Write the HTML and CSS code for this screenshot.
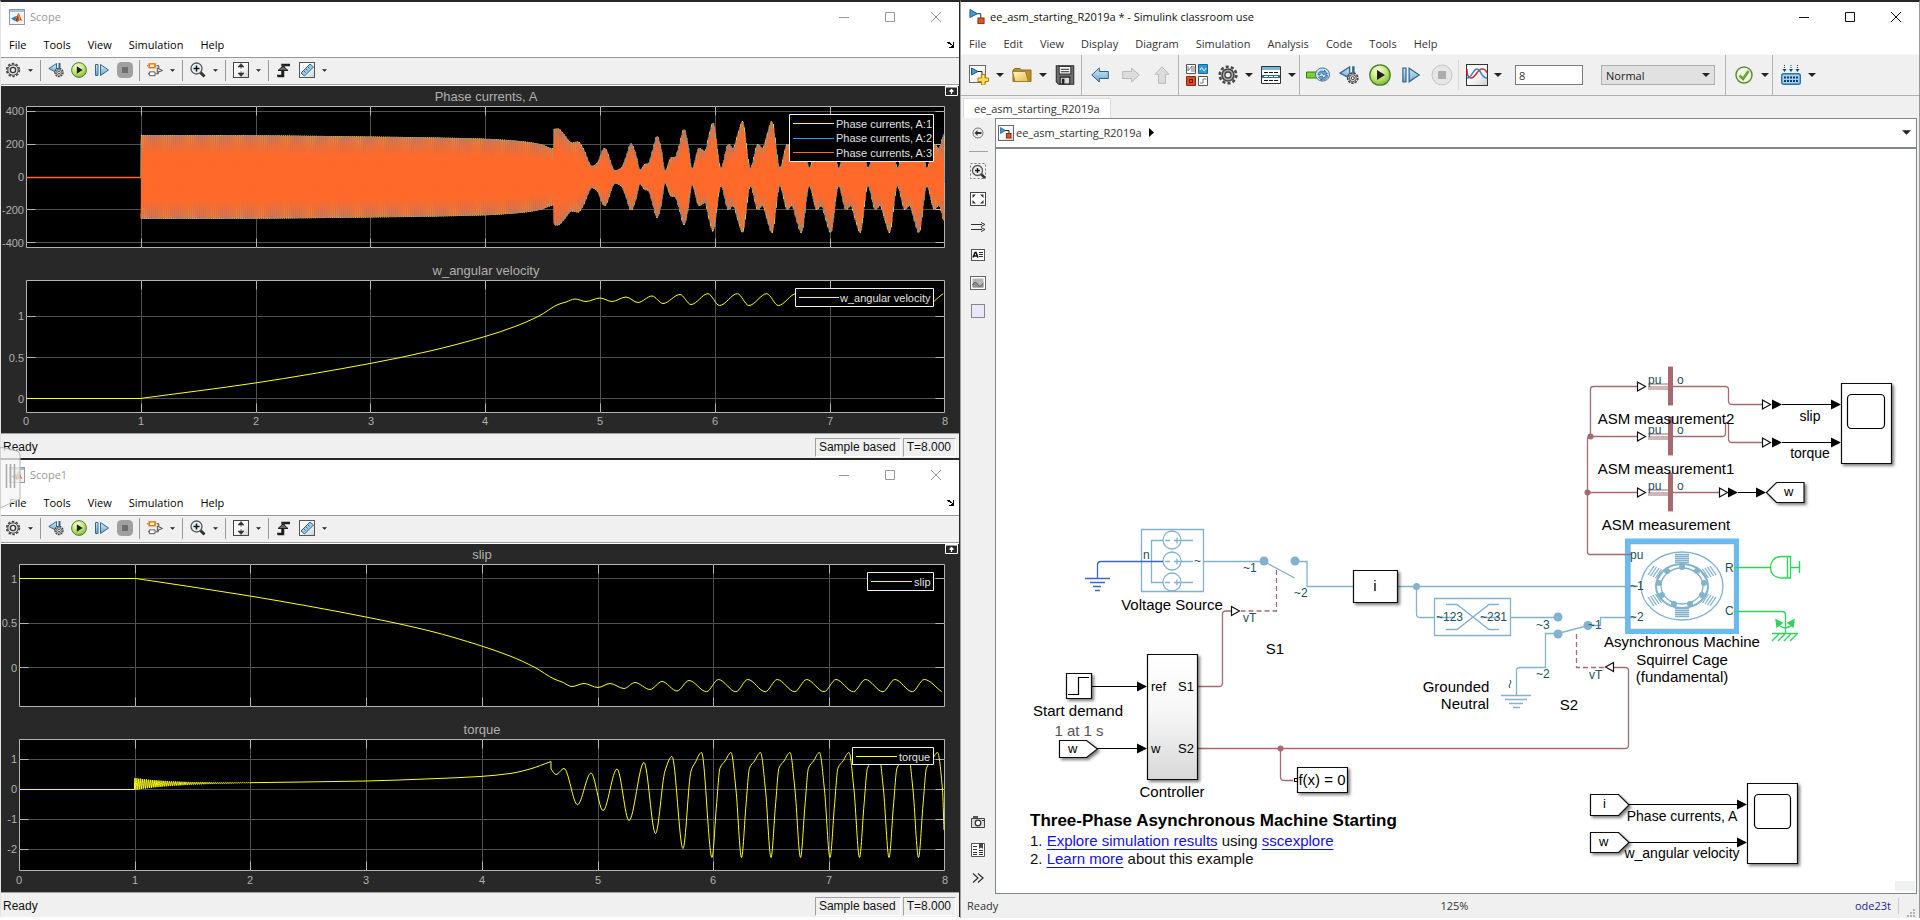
FILE: index.html
```html
<!DOCTYPE html>
<html lang="en">
<head>
<meta charset="utf-8">
<title>Simulink workspace</title>
<link rel="stylesheet" href="styles.css">
</head>
<body>
<svg class="defs" aria-hidden="true">
  <defs>
    <linearGradient id="gBlue" x1="0" y1="0" x2="0" y2="1"><stop offset="0" stop-color="#d3ebf8"/><stop offset="1" stop-color="#69a9d3"/></linearGradient>
    <linearGradient id="gPage" x1="0" y1="0" x2="1" y2="1"><stop offset="0" stop-color="#fff"/><stop offset=".5" stop-color="#fafafa"/><stop offset="1" stop-color="#cfcfcf"/></linearGradient>
    <radialGradient id="gGreen" cx=".4" cy=".3" r=".8"><stop offset="0" stop-color="#fbffe8"/><stop offset=".5" stop-color="#c3e673"/><stop offset="1" stop-color="#69ad2c"/></radialGradient>
    <linearGradient id="gFolder" x1="0" y1="0" x2="1" y2="1"><stop offset="0" stop-color="#fff8cf"/><stop offset="1" stop-color="#e3b94c"/></linearGradient>
    <linearGradient id="gCtl" x1="0" y1="0" x2="0" y2="1"><stop offset="0" stop-color="#fff"/><stop offset=".45" stop-color="#f7f7f7"/><stop offset="1" stop-color="#d8d8d8"/></linearGradient>
    <filter id="shadow" x="-20%" y="-20%" width="150%" height="150%"><feDropShadow dx="2" dy="2" stdDeviation="1.5" flood-color="#000" flood-opacity=".5"/></filter>
  </defs>
  <symbol id="matlab" viewBox="0 0 16 16"><rect x=".5" y=".5" width="15" height="15" fill="#f3f5f7" stroke="#8e9aa5"/><path d="M1 2h14" stroke="#9fc3de" stroke-width="2"/><path d="M2 9.500l4-2 2-.500-2 5z" fill="#2f7fb5"/><path d="M6 11.500C8 9 8.500 4 9.500 4s2 5 4 8c-2-1-3-1-5 1z" fill="#d5552a"/><path d="M9 6c-1 3-1.500 4-2.600 5.500l1.600 1z" fill="#7a2c1c"/><path d="M9.700 5c.5 2 1 5 .8 6.500" stroke="#f5a43c" fill="none"/></symbol>
  <symbol id="simulink" viewBox="0 0 17 17"><path d="M8 5h4.500v5" fill="none" stroke="#222"/><path d="M1 .500v8.500l8-4z" fill="#3d9ad3" stroke="#1c5c8b"/><rect x="9.500" y="9.500" width="6.500" height="6" fill="#dd5526" stroke="#8b2a0d"/></symbol>
  <symbol id="simpage" viewBox="0 0 16 16"><rect x=".5" y=".5" width="15" height="15" fill="url(#gPage)" stroke="#666"/><path d="M7 5.500h4V9" fill="none" stroke="#222"/><path d="M2.500 2.500v6l5-3z" fill="#3d9ad3" stroke="#1c5c8b" stroke-width=".7"/><rect x="8.500" y="8.500" width="4.500" height="4.500" fill="#dd5526" stroke="#8b2a0d"/></symbol>
  <symbol id="gear" viewBox="0 0 16 16"><circle cx="8" cy="8" r="6.300" fill="none" stroke="#444" stroke-width="1.700" stroke-dasharray="2.400 1.560"/><circle cx="8" cy="8" r="5.200" fill="#e3e3e3" stroke="#4a4a4a"/><circle cx="8" cy="8" r="2.600" fill="#f4f4f4" stroke="#3a3a3a" stroke-width="1.400"/></symbol>
  <symbol id="biggear" viewBox="0 0 20 20"><circle cx="10" cy="10" r="8.300" fill="none" stroke="#4a4a4a" stroke-width="2.600" stroke-dasharray="3.100 2.110"/><circle cx="10" cy="10" r="6" fill="#aaa" stroke="#444" stroke-width="1.600"/><circle cx="10" cy="10" r="3" fill="#f1f1f1" stroke="#444" stroke-width="1.300"/></symbol>
  <symbol id="caret" viewBox="0 0 8 4"><path d="M0 0h8L4 4z" fill="#222"/></symbol>
  <symbol id="back" viewBox="0 0 16 16"><path d="M8.500 1.500v9L.800 6.500z" fill="url(#gBlue)" stroke="#35688f"/><path d="M11.500 1v6" stroke="#35688f" stroke-width="2"/><circle cx="11" cy="10.500" r="4" fill="#ececec" stroke="#444" stroke-width="1.400" stroke-dasharray="1.900 .8"/><circle cx="11" cy="10.500" r="2.800" fill="#ddd" stroke="#555" stroke-width=".8"/><circle cx="11" cy="10.500" r="1.200" fill="#fff" stroke="#333" stroke-width=".8"/></symbol>
  <symbol id="play" viewBox="0 0 22 22"><circle cx="11" cy="11" r="10.200" fill="url(#gGreen)" stroke="#47802c" stroke-width="1.300"/><path d="M8 6v10l8-5z" fill="#1f1f1f"/></symbol>
  <symbol id="step" viewBox="0 0 16 16"><path d="M1.500 2.500h2.500v11H1.500z" fill="url(#gBlue)" stroke="#35688f"/><path d="M6.500 2.500v11L14.500 8z" fill="url(#gBlue)" stroke="#35688f"/></symbol>
  <symbol id="stop" viewBox="0 0 16 16"><rect width="16" height="16" rx="4.500" fill="#a0a0a0"/><rect x="5" y="5" width="6" height="6" fill="#6e6e6e"/></symbol>
  <symbol id="blocks" viewBox="0 0 17 16"><path d="M0 3.500h2M9 3.500h3.500v4M1 12h2m6 0h3v-3" fill="none" stroke="#444"/><path d="M1 .500h9v6H1z" fill="#fbcf8c"/><path d="M2.500 1.500h6v4h-6z" fill="#fff1d8" stroke="#d8761c" stroke-width="1.500"/><path d="M2.500 10h6v4h-6z" fill="#fff" stroke="#555"/><path d="M11 6l5.500 2.500L11 10.500z" fill="#eee" stroke="#444"/></symbol>
  <symbol id="zoom" viewBox="0 0 16 16"><path d="M10 10l4.500 4.500" stroke="#333" stroke-width="3"/><circle cx="6.500" cy="6.500" r="5.500" fill="#e5f1f8" stroke="#555" stroke-width="1.300"/><path d="M3.500 6.500h6M6.500 3.500v6" stroke="#111" stroke-width="1.500"/></symbol>
  <symbol id="scale" viewBox="0 0 16 16"><rect x=".5" y=".5" width="15" height="15" fill="url(#gPage)" stroke="#444"/><path d="M8 1.500l3 3.500H5zM8 14.500l3-3.500H5zM8 4v3m0 2v3" fill="#333" stroke="#333" stroke-width=".6"/></symbol>
  <symbol id="trigger" viewBox="0 0 16 16"><path d="M1 13.500h5v-6M1.500 14.500h6v-7M6 4.500V2.500h8M8 5V3.500h6" fill="none" stroke="#1e1e1e" stroke-width="1.500"/><path d="M2 8.500L7 4l5 4.500z" fill="#666" stroke="#1e1e1e"/></symbol>
  <symbol id="ruler" viewBox="0 0 16 16"><rect x=".5" y=".5" width="15" height="15" fill="url(#gPage)" stroke="#555"/><path d="M2 11L11 2l3.500 3L5.500 14z" fill="#9dcbe6" stroke="#31658b"/><path d="M5 9l1.500 1.500M7 7l1.500 1.500M9 5l1.500 1.500" stroke="#31658b"/></symbol>
  <symbol id="dock" viewBox="0 0 8 6"><path d="M0 0h3v1H0zM1 1h3v1H1zM3 2h2v1H3zM6 0h1v6H2V5h2V4h1V3h1z" fill="#000"/></symbol>
  <symbol id="min" viewBox="0 0 10 10"><path d="M0 5.500h10" stroke="currentColor"/></symbol>
  <symbol id="max" viewBox="0 0 10 10"><path d="M.500.500h9v9h-9z" fill="none" stroke="currentColor"/></symbol>
  <symbol id="close" viewBox="0 0 10 10"><path d="M0 0l10 10M10 0L0 10" stroke="currentColor"/></symbol>
  <symbol id="newmodel" viewBox="0 0 20 20"><rect x=".5" y=".5" width="16" height="17" fill="url(#gPage)" stroke="#666"/><path d="M8 6.500h5v6" fill="none" stroke="#222"/><path d="M2.500 3v7l6.500-3.500z" fill="#3d9ad3" stroke="#1c5c8b"/><path d="M12.500 9.500h3.500v3.500h3.500v3.500H16V20h-3.500v-3.500H9V13h3.500z" fill="#ffe05a" stroke="#bb7d12"/></symbol>
  <symbol id="folder" viewBox="0 0 20 16"><path d="M1 14.500V3l2-1.500h5L9.500 3H19v11.500z" fill="#b98f2d" stroke="#8f6d1f"/><path d="M.500 4.500h13l3 10H3z" fill="url(#gFolder)" stroke="#a67c22"/></symbol>
  <symbol id="save" viewBox="0 0 18 19"><path d="M.700.700h16.600v17.600H3L.700 16z" fill="#6d6d6d" stroke="#2c2c2c"/><path d="M3.500 1.500h11v7h-11z" fill="#fff" stroke="#333"/><path d="M5 4h8M5 6.500h8" stroke="#222"/><path d="M4.500 11.500h9v6.500h-9z" fill="#ddd" stroke="#222"/><path d="M6 13h2.500v5H6z" fill="#222"/></symbol>
  <symbol id="left" viewBox="0 0 18 16"><path d="M.800 8l7.500-7v3.500h9v7h-9V15z" fill="url(#gBlue)" stroke="#2f5f86"/></symbol>
  <symbol id="right" viewBox="0 0 18 16"><path d="M17.200 8L9.700 1v3.500h-9v7h9V15z" fill="#ddd" stroke="#b9b9b9"/></symbol>
  <symbol id="up" viewBox="0 0 16 18"><path d="M8 .800l7 7.500h-3.500v9h-7v-9H1z" fill="#ddd" stroke="#b9b9b9"/></symbol>
  <symbol id="library" viewBox="0 0 22 22"><path d="M.500.500h9v9h-9z" fill="#fff" stroke="#555"/><path d="M2 2v5l4-5v6M8 2v6" fill="none" stroke="#777"/><path d="M12.500.500h9v9h-9z" fill="#2d9ad6" stroke="#1c6695"/><path d="M14 6c1.500-4 2.500-2 3-.500s1.500 2.500 3-1.500" fill="none" stroke="#fff"/><path d="M.500 12.500h9v9h-9z" fill="#dd4d1c" stroke="#8e2a08"/><path d="M3.500 15.500h3v3h-3z" fill="none" stroke="#5f1b04"/><path d="M12.500 12.500h9v9h-9z" fill="#fff" stroke="#555"/><path d="M14 19h3v-4h3.500" fill="none" stroke="#777"/></symbol>
  <symbol id="explorer" viewBox="0 0 20 18"><path d="M.500.500h19v17H.500z" fill="#fff" stroke="#333"/><path d="M1 1h18v3H1z" fill="#7db4da"/><path d="M3 6.500h14M3 14.500h14" stroke="#111" stroke-dasharray="4 1"/><path d="M1 9h18v3H1z" fill="#356d9d"/><path d="M3 10.500h14" stroke="#fff" stroke-dasharray="4 1"/></symbol>
  <symbol id="update" viewBox="0 0 24 18"><path d="M.500 6h10v6h-10z" fill="#7ed030" stroke="#397d12"/><rect x="9.500" y="2" width="14" height="13" rx="6.500" fill="#cde5f5" stroke="#3c719e"/><path d="M12 9c0-3.500 3.500-5 6.500-3V4l3 4-4.500.5V7c-2-.500-3 .5-3 2zM21.500 9.500c0 3-3 5-6 3.500v1.500L12.500 11l4-1v1.500c2 .500 3 0 3-2z" fill="#6ea9d4" stroke="#2b5f8b" stroke-width=".7"/></symbol>
  <symbol id="stopoff" viewBox="0 0 22 22"><circle cx="11" cy="11" r="10" fill="#e6e6e6" stroke="#c4c4c4"/><path d="M7 7h8v8H7z" fill="#adadad"/></symbol>
  <symbol id="wave" viewBox="0 0 22 22"><rect x=".5" y=".5" width="21" height="21" fill="url(#gPage)" stroke="#333"/><path d="M1 5c0 6 1 9 4 9 5 0 6-9 11-9 3 0 4 1 5 4" fill="none" stroke="#c8312f" stroke-width="1.500"/><path d="M1 14c5 0 6-9 10-9s4 9 10 9" fill="none" stroke="#3c82c8" stroke-width="1.500"/></symbol>
  <symbol id="check" viewBox="0 0 18 18"><circle cx="9" cy="9" r="8" fill="#f1f6e8" stroke="#5d8a33" stroke-width="1.500"/><path d="M4.500 9.500L8 13l5.500-8" fill="none" stroke="#6aa52a" stroke-width="2.600"/></symbol>
  <symbol id="deploy" viewBox="0 0 20 20"><path d="M3.500 0v5M10 0v5M16.500 0v5" stroke="#16466f" stroke-dasharray="1 1"/><path d="M1.500 4h4l-2 3zM8 4h4l-2 3zM14.500 4h4l-2 3z" fill="#16466f"/><rect x=".7" y="8.700" width="18.600" height="10.600" rx="2" fill="#a5d1f0" stroke="#2573b1" stroke-width="1.400"/><path d="M3 12.500h14M3 16h14" stroke="#123c61" stroke-width="2" stroke-dasharray="2 1"/></symbol>
  <symbol id="hide" viewBox="0 0 16 16"><circle cx="8" cy="8" r="5" fill="#eee" stroke="#777"/><path d="M4.500 8l3-3v2h4v2h-4v2z" fill="#333"/></symbol>
  <symbol id="zoomarea" viewBox="0 0 16 16"><path d="M.500.500h15v15H.500z" fill="none" stroke="#777" stroke-dasharray="2 2"/><path d="M10 10l5 5" stroke="#333" stroke-width="2.500"/><circle cx="7.500" cy="7.500" r="5" fill="#f1f1f1" stroke="#555" stroke-width="1.300"/><path d="M5 7.500h5M7.500 5v5" stroke="#111" stroke-width="1.400"/></symbol>
  <symbol id="fit" viewBox="0 0 16 16"><rect x=".5" y="1.500" width="15" height="13" fill="#fff" stroke="#444"/><path d="M2.500 3.500h3.500L2.500 7zM13.500 3.500H10L13.500 7zM2.500 12.500h3.500L2.500 9zM13.500 12.500H10L13.500 9z" fill="#333"/></symbol>
  <symbol id="arrows" viewBox="0 0 16 16"><path d="M1 5.500h11M1 10.500h11M11 3.500l4 2-4 2M11 8.500l4 2-4 2" fill="none" stroke="#333"/></symbol>
  <symbol id="note" viewBox="0 0 16 16"><rect x="1.500" y="2.500" width="13" height="11" fill="#fff" stroke="#555"/><path d="M3 10.500l2-5h1l2 5M4 9h3" fill="none" stroke="#111" stroke-width="1.500"/><path d="M9 5.500h4M9 7.500h4M9 9.500h4" stroke="#333"/></symbol>
  <symbol id="picture" viewBox="0 0 16 16"><rect x=".5" y="1.500" width="15" height="13" fill="#fff" stroke="#666"/><path d="M2.500 3.500h11v9h-11z" fill="#b5b5b5"/><path d="M2.500 11V9c3-4 5 0 6 1.500s2 1 5-2v4h-11z" fill="#8f8f8f"/><path d="M2.500 10c3-5 4-2 6 .500 1 1.500 2 .500 5-2.500" fill="none" stroke="#555"/></symbol>
  <symbol id="square" viewBox="0 0 16 16"><rect x="1.500" y="1.500" width="13" height="13" fill="#e8e8f8" stroke="#888"/></symbol>
  <symbol id="camera" viewBox="0 0 16 16"><path d="M1.500 4.500h13v9h-13z" fill="#ddd" stroke="#444"/><path d="M3 2h5v2H3z" fill="#555"/><circle cx="8" cy="9" r="2.800" fill="#fff" stroke="#333" stroke-width="1.300"/><path d="M12 6h2v1h-2z" fill="#333"/></symbol>
  <symbol id="books" viewBox="0 0 16 16"><path d="M1.500 1.500h13v13h-13z" fill="#fff" stroke="#555"/><path d="M3 4.500h4M3 7.500h4M3 10.500h4M3 12.500h4M9 8.500h4M9 10.500h4M9 12.500h4" stroke="#333"/><path d="M9 1h4v6l-2-1.500L9 7z" fill="#444"/></symbol>
  <symbol id="more" viewBox="0 0 16 16"><path d="M3 3.500l5 4.500-5 4.500M8 3.500l5 4.500-5 4.500" fill="none" stroke="#333" stroke-width="1.300"/></symbol>
  <symbol id="bar" viewBox="0 0 40 40"><path d="M2 18h20M2 21h20M2 23h20" stroke="#a46a70" stroke-width="1.200"/><path d="M22 1h5v38h-5z" fill="#a46a70"/><path d="M22 0h5v1h-5zM22 39h5v1h-5z" fill="#dcc4c6"/></symbol>
  <symbol id="undock" viewBox="0 0 13 10"><path d="M.500.500h12v9H.500zM0 1h13" fill="#282828" stroke="#fff"/><path d="M6.500 8V4M4.500 5.500l2-2 2 2" fill="none" stroke="#fff" stroke-width="1.200"/></symbol>
</svg>

<main class="desk">
  <div class="scopes">
    <section class="window idle">
      <header class="titlebar"><svg class="i16"><use href="#matlab"/></svg><h1>Scope</h1>
        <button class="wbtn" aria-label="Minimize"><svg><use href="#min"/></svg></button><button class="wbtn" aria-label="Maximize"><svg><use href="#max"/></svg></button><button class="wbtn" aria-label="Close"><svg><use href="#close"/></svg></button></header>
      <nav class="menu"><button>File</button><button>Tools</button><button>View</button><button>Simulation</button><button>Help</button><button class="dock" aria-label="Dock"><svg><use href="#dock"/></svg></button></nav>
      <div class="tools">
        <button aria-label="Settings"><svg class="i16"><use href="#gear"/></svg></button><button class="drop" aria-label="More settings"><svg><use href="#caret"/></svg></button><i></i>
        <button aria-label="Step back"><svg class="i16"><use href="#back"/></svg></button><button aria-label="Run"><svg class="i16"><use href="#play"/></svg></button><button aria-label="Step forward"><svg class="i16"><use href="#step"/></svg></button><button aria-label="Stop"><svg class="i16"><use href="#stop"/></svg></button><i></i>
        <button aria-label="Highlight block"><svg class="i16"><use href="#blocks"/></svg></button><button class="drop" aria-label="More highlight"><svg><use href="#caret"/></svg></button><i></i>
        <button aria-label="Zoom"><svg class="i16"><use href="#zoom"/></svg></button><button class="drop" aria-label="More zoom"><svg><use href="#caret"/></svg></button><i></i>
        <button aria-label="Scale axes"><svg class="i16"><use href="#scale"/></svg></button><button class="drop" aria-label="More scaling"><svg><use href="#caret"/></svg></button><i></i>
        <button aria-label="Triggers"><svg class="i16"><use href="#trigger"/></svg></button><button aria-label="Measurements"><svg class="i16"><use href="#ruler"/></svg></button><button class="drop" aria-label="More measurements"><svg><use href="#caret"/></svg></button>
      </div>
      <svg class="plot" viewBox="1 86 958 347">
        <g id="phase"></g><g id="omega"></g>
        <g class="ptitle"><text x="486" y="101">Phase currents, A</text><text x="486" y="275">w_angular velocity</text></g>
        <g class="ylab"><text x="24" y="115">400</text><text x="24" y="148">200</text><text x="24" y="181">0</text><text x="24" y="214">-200</text><text x="24" y="247">-400</text><text x="24" y="320">1</text><text x="24" y="362">0.5</text><text x="24" y="403">0</text></g>
        <g class="xlab"><text x="26" y="425">0</text><text x="141" y="425">1</text><text x="256" y="425">2</text><text x="371" y="425">3</text><text x="485" y="425">4</text><text x="600" y="425">5</text><text x="715" y="425">6</text><text x="830" y="425">7</text><text x="945" y="425">8</text></g>
        <g class="legend"><path class="frame" d="M789.500 114.500h144v47h-144z"/><path class="y" d="M793 123.500h41"/><path class="b" d="M793 138.500h41"/><path class="o" d="M793 152.500h41"/><text x="836" y="128">Phase currents, A:1</text><text x="836" y="142">Phase currents, A:2</text><text x="836" y="157">Phase currents, A:3</text>
        <path class="frame" d="M795.500 288.500h138v18h-138z"/><path class="y" d="M799 297.500h40"/><text x="840" y="302">w_angular velocity</text></g>
        <use href="#undock" x="945" y="86" width="13" height="10"/>
      </svg>
      <footer class="status"><span>Ready</span><output>Sample based</output><output>T=8.000</output></footer>
    </section>

    <section class="window idle">
      <header class="titlebar"><svg class="i16"><use href="#matlab"/></svg><h1>Scope1</h1>
        <button class="wbtn" aria-label="Minimize"><svg><use href="#min"/></svg></button><button class="wbtn" aria-label="Maximize"><svg><use href="#max"/></svg></button><button class="wbtn" aria-label="Close"><svg><use href="#close"/></svg></button></header>
      <nav class="menu"><button>File</button><button>Tools</button><button>View</button><button>Simulation</button><button>Help</button><button class="dock" aria-label="Dock"><svg><use href="#dock"/></svg></button></nav>
      <div class="tools">
        <button aria-label="Settings"><svg class="i16"><use href="#gear"/></svg></button><button class="drop" aria-label="More settings"><svg><use href="#caret"/></svg></button><i></i>
        <button aria-label="Step back"><svg class="i16"><use href="#back"/></svg></button><button aria-label="Run"><svg class="i16"><use href="#play"/></svg></button><button aria-label="Step forward"><svg class="i16"><use href="#step"/></svg></button><button aria-label="Stop"><svg class="i16"><use href="#stop"/></svg></button><i></i>
        <button aria-label="Highlight block"><svg class="i16"><use href="#blocks"/></svg></button><button class="drop" aria-label="More highlight"><svg><use href="#caret"/></svg></button><i></i>
        <button aria-label="Zoom"><svg class="i16"><use href="#zoom"/></svg></button><button class="drop" aria-label="More zoom"><svg><use href="#caret"/></svg></button><i></i>
        <button aria-label="Scale axes"><svg class="i16"><use href="#scale"/></svg></button><button class="drop" aria-label="More scaling"><svg><use href="#caret"/></svg></button><i></i>
        <button aria-label="Triggers"><svg class="i16"><use href="#trigger"/></svg></button><button aria-label="Measurements"><svg class="i16"><use href="#ruler"/></svg></button><button class="drop" aria-label="More measurements"><svg><use href="#caret"/></svg></button>
      </div>
      <svg class="plot" viewBox="1 544 958 348">
        <g id="slip"></g><g id="torque"></g>
        <g class="ptitle"><text x="482" y="559">slip</text><text x="482" y="734">torque</text></g>
        <g class="ylab"><text x="17" y="583">1</text><text x="17" y="627">0.5</text><text x="17" y="672">0</text><text x="17" y="763">1</text><text x="17" y="793">0</text><text x="17" y="823">-1</text><text x="17" y="853">-2</text></g>
        <g class="xlab"><text x="19" y="884">0</text><text x="135" y="884">1</text><text x="250" y="884">2</text><text x="366" y="884">3</text><text x="482" y="884">4</text><text x="598" y="884">5</text><text x="713" y="884">6</text><text x="829" y="884">7</text><text x="945" y="884">8</text></g>
        <g class="legend"><path class="frame" d="M867.500 572.500h66v18h-66z"/><path class="y" d="M871 581.500h41"/><text x="914" y="586">slip</text>
        <path class="frame" d="M852.500 747.500h81v17h-81z"/><path class="y" d="M856 756.500h41"/><text x="899" y="761">torque</text></g>
        <use href="#undock" x="945" y="544" width="13" height="10"/>
      </svg>
      <footer class="status"><span>Ready</span><output>Sample based</output><output>T=8.000</output></footer>
    </section>
    <svg class="drawer" viewBox="0 0 21 62" aria-hidden="true"><path d="M0 0l17 4q3 1 3 4v44L0 61z" fill="#f4f4f4" fill-opacity=".75" stroke="#b5b5b5"/><path d="M6.500 17v24M10.500 17v24M14.500 17v24" stroke="#a9a9a9" stroke-width="1.500"/></svg>
  </div>

  <section class="window model">
    <header class="titlebar"><svg class="i16"><use href="#simulink"/></svg><h1>ee_asm_starting_R2019a * - Simulink classroom use</h1>
      <button class="wbtn" aria-label="Minimize"><svg><use href="#min"/></svg></button><button class="wbtn" aria-label="Maximize"><svg><use href="#max"/></svg></button><button class="wbtn" aria-label="Close"><svg><use href="#close"/></svg></button></header>
    <nav class="menu"><button>File</button><button>Edit</button><button>View</button><button>Display</button><button>Diagram</button><button>Simulation</button><button>Analysis</button><button>Code</button><button>Tools</button><button>Help</button></nav>
    <div class="tools big">
      <button aria-label="New model"><svg class="i20"><use href="#newmodel"/></svg></button><button class="drop" aria-label="New options"><svg><use href="#caret"/></svg></button><button aria-label="Open"><svg class="i20"><use href="#folder"/></svg></button><button class="drop" aria-label="Recent files"><svg><use href="#caret"/></svg></button><button aria-label="Save"><svg class="i20"><use href="#save"/></svg></button><i></i>
      <button aria-label="Back"><svg class="i18"><use href="#left"/></svg></button><button aria-label="Forward"><svg class="i18"><use href="#right"/></svg></button><button aria-label="Up to parent"><svg class="i18"><use href="#up"/></svg></button><i></i>
      <button aria-label="Library browser"><svg class="i22"><use href="#library"/></svg></button><button aria-label="Model configuration"><svg class="i20"><use href="#biggear"/></svg></button><button class="drop" aria-label="Configuration options"><svg><use href="#caret"/></svg></button><button aria-label="Model explorer"><svg class="i20"><use href="#explorer"/></svg></button><button class="drop" aria-label="Explorer options"><svg><use href="#caret"/></svg></button><i></i>
      <button aria-label="Update diagram"><svg class="i24"><use href="#update"/></svg></button><button aria-label="Step back"><svg class="i20"><use href="#back"/></svg></button><button aria-label="Run"><svg class="i22"><use href="#play"/></svg></button><button aria-label="Step forward"><svg class="i20"><use href="#step"/></svg></button><button aria-label="Stop"><svg class="i22"><use href="#stopoff"/></svg></button><i class="short"></i>
      <button aria-label="Data inspector"><svg class="i22"><use href="#wave"/></svg></button><button class="drop" aria-label="Inspector options"><svg><use href="#caret"/></svg></button>
      <input class="time" type="text" value="8" aria-label="Simulation stop time">
      <label class="mode"><select aria-label="Simulation mode"><option>Normal</option></select><svg><use href="#caret"/></svg></label><i></i>
      <button aria-label="Check model"><svg class="i18"><use href="#check"/></svg></button><button class="drop" aria-label="Check options"><svg><use href="#caret"/></svg></button><i></i>
      <button aria-label="Build model"><svg class="i20"><use href="#deploy"/></svg></button><button class="drop" aria-label="Build options"><svg><use href="#caret"/></svg></button>
    </div>
    <div class="tabs"><button>ee_asm_starting_R2019a</button></div>
    <div class="work">
      <aside class="side">
        <button aria-label="Hide browser"><svg class="i16"><use href="#hide"/></svg></button><hr>
        <button aria-label="Zoom"><svg class="i16"><use href="#zoomarea"/></svg></button>
        <button aria-label="Fit to view"><svg class="i16"><use href="#fit"/></svg></button>
        <button aria-label="Signal lines"><svg class="i16"><use href="#arrows"/></svg></button>
        <button aria-label="Annotation"><svg class="i16"><use href="#note"/></svg></button>
        <button aria-label="Image"><svg class="i16"><use href="#picture"/></svg></button>
        <button aria-label="Area"><svg class="i16"><use href="#square"/></svg></button>
        <button class="low" aria-label="Screenshot"><svg class="i16"><use href="#camera"/></svg></button>
        <button aria-label="Viewmarks"><svg class="i16"><use href="#books"/></svg></button>
        <button aria-label="More"><svg class="i16"><use href="#more"/></svg></button>
      </aside>
      <div class="editor">
        <div class="crumbs"><svg class="i16"><use href="#simpage"/></svg><a href="#">ee_asm_starting_R2019a</a><svg class="tri" viewBox="0 0 5 9"><path d="M0 0l5 4.500L0 9z"/></svg><button aria-label="Path history"><svg><use href="#caret"/></svg></button></div>
        <div class="canvas">
        <svg class="diagram" viewBox="996 149 920 744">
          <g class="sig">
            <path d="M1630 554.500H1590q-2.500 0-2.500-2.500V439q0-2.500 3-2.500V389q0-2.500 3-2.500H1637M1590 436.500H1637M1588 492.500H1637"/>
            <path d="M1673 386.500H1725q3.500 0 3.500 3V401q0 3.500 3.500 3.500H1762M1673 436.500H1722q3.500 0 3.500-3V424q0-1.500 1.500-1.500t1.500 1.500V439q0 3.500 3.500 3.500H1762M1673 492.500H1719"/>
            <path d="M1614 667.500h11q3.500 0 3.500 3V745q0 3.500-3.500 3.500H1198M1280.500 748.500V777q0 3.500 3.500 3.500h9M1198 686.500h21q3.500 0 3.500-3.500V614q0-3 3.500-3h6"/>
            <path stroke-dasharray="5 3" d="M1276.500 570v41H1241M1576.500 634v33.500H1604"/>
            <g class="dot"><circle cx="1590.500" cy="436.500" r="3"/><circle cx="1587.500" cy="492.500" r="3"/><circle cx="1280.500" cy="748.500" r="3"/></g>
          </g>
          <use href="#bar" x="1646" y="366" width="40" height="40"/><use href="#bar" x="1646" y="416" width="40" height="40"/><use href="#bar" x="1646" y="472" width="40" height="40"/>
          <g class="open"><path d="M1637.500 382v9l8-4.500zM1637.500 432v9l8-4.500zM1637.500 488v9l8-4.500zM1762.500 400v9l8-4.500zM1762.500 438v9l8-4.500zM1719.500 488v9l8-4.500zM1613.500 662.500v9l-8-4.500zM1231.500 606.500v9l8-4.500z"/></g>
          <g class="wire"><path d="M1782 404.500h50M1782 442.500h50M1738 492.500h20M1092 686.500h46M1097 748.500h41M1629 804.500h109M1629 842.500h109"/></g>
          <path d="M1772 399.500l10 5-10 5zM1772 437.500l10 5-10 5zM1728 487.500l10 5-10 5zM1831 399.500l10 5-10 5zM1831 437.500l10 5-10 5zM1756 487.500l10 5-10 5zM1137 681.500l10 5-10 5zM1137 743.500l10 5-10 5zM1737 799.500l10 5-10 5zM1737 837.500l10 5-10 5z"/>

          <g class="elec">
            <path d="M1141.500 529.500h62v62h-62zM1163 540.500h-11.500v42H1163M1181 540.500h12M1181 561.500h12M1181 582.500h12M1204 561.500h60M1264 561.500l30.500 16.500M1295 561.500h12v25h46M1398 586.500h232M1416.500 587v27q0 3.500 3.500 3.500h15M1434.500 598.500h76v37h-76zM1446 604.500h11l32 25h10M1446 629.500h11l32-25h10M1437 617.500h18M1481 617.500h18M1511 617.500h47M1558 633.500h-12.500v34H1520q-3.500 0-3.500 3V695M1501 695.500h30M1505 699.500h22M1509 703.500h14M1513 707.500h7M1558 633.500l30-8M1588 625.500h12.500v-8H1630"/>
            <circle cx="1172" cy="540" r="9"/><circle cx="1172" cy="561" r="9"/><circle cx="1172" cy="582" r="9"/>
            <path d="M1165 540.500h5M1174 540.500h6M1177 537.500v6M1165 561.500h5M1174 561.500h6M1177 558.500v6M1165 582.500h5M1174 582.500h6M1177 579.500v6"/>
            <g class="dot"><circle cx="1264" cy="561" r="4.500"/><circle cx="1295" cy="561" r="4.500"/><circle cx="1416.500" cy="586.500" r="3.500"/><circle cx="1558" cy="617" r="4.500"/><circle cx="1558" cy="634" r="4.500"/><circle cx="1588" cy="625.500" r="4.500"/></g>
          </g>
          <path class="gnd" d="M1163 561.500H1101q-3.500 0-3.500 3.500V578M1085 578.500h25M1090 582.500h15M1093 586.500h8M1095 590.500h5"/>

          <path d="M1627.500 541h109v90.500h-109z" fill="#fff" stroke="#66bcf9" stroke-width="5"/>
          <g class="elec">
            <path d="M1630 543.500h104.500v86H1630zM1624 586.500h14M1624 617.500h12"/>
            <ellipse cx="1682" cy="586" rx="41" ry="34"/><ellipse cx="1682" cy="586" rx="26" ry="22" stroke-width="2"/><ellipse cx="1682" cy="586" rx="21" ry="18"/>
            <path d="M1675 554.500h14m-14 2h14m-14 2h14m-14 2h14m-14 2h14M1675 608.500h14m-14 2h14m-14 2h14m-14 2h14m-14 2h14"/>
            <path d="M1648 575l6-9m-3.500 10l6-9m-3.500 10l6-9m-3.500 10l6-9m-3.500 10l6-9"/>
            <path d="M1716 575l-6-9m3.500 10l-6-9m3.500 10l-6-9m3.500 10l-6-9m3.500 10l-6-9M1648 597l6 9m-3.500-10l6 9m-3.500-10l6 9m-3.500-10l6 9m-3.500-10l6 9M1716 597l-6 9m3.500-10l-6 9m3.500-10l-6 9m3.500-10l-6 9m3.500-10l-6 9"/>
            <g class="dot"><circle cx="1682" cy="567" r="3"/><circle cx="1697" cy="571" r="3"/><circle cx="1704" cy="583" r="3"/><circle cx="1702" cy="595" r="3"/><circle cx="1690" cy="604" r="3"/><circle cx="1674" cy="604" r="3"/><circle cx="1662" cy="595" r="3"/><circle cx="1659" cy="583" r="3"/><circle cx="1667" cy="571" r="3"/></g>
          </g>
          <path class="sigline" d="M1624 554.500h8"/>
          <g class="mech"><path d="M1734 567.500h36M1790.500 556.500h-9c-8 0-11 6-11 11s3 10.500 11 10.500h9zM1787.500 557v21M1791 567.500h8M1799.500 561v12M1734 611.500h48q3.500 0 3.500 3.500v19M1772 633.500h26M1779 634l-7 7M1785 634l-7 7M1791 634l-7 7M1797 634l-7 7M1777 622q2 5 8 6 7-1 9-6"/><path class="fill" d="M1776 620l6 3-5 4zM1794 620l-6 3 5 4z"/></g>

          <g class="block" filter="url(#shadow)">
            <path d="M1841.500 383.500h50v80h-50zM1747.500 783.500h50v80h-50zM1353.500 570.500h44v32h-44zM1066.500 673.500h25v25h-25zM1297.500 767.500h50v25h-50zM1766.500 492.500l10-10h27.500v20h-27.500zM1059.500 740.500h27l11 8.500-11 8.500h-27zM1590.500 794.500h28l10.500 10.500-10.500 10.500h-28zM1590.500 832.500h28l10.500 10-10.500 10h-28z"/>
            <path class="shaded" d="M1147.500 654.500h50v125h-50z"/>
          </g>
          <g class="wire"><rect x="1847.500" y="394.500" width="37" height="34" rx="4"/><rect x="1754.500" y="794.500" width="36" height="34" rx="4"/><path d="M1068 694.500h10.500v-17H1089"/><path d="M1294.500 778.500h3v3h-3z"/></g>

          <g class="port">
            <text x="1648" y="384">pu</text><text x="1677" y="384">o</text><text x="1648" y="434">pu</text><text x="1677" y="434">o</text><text x="1648" y="490">pu</text><text x="1677" y="490">o</text>
            <text x="1630" y="559">pu</text><text x="1630" y="590">~1</text><text x="1630" y="621">~2</text><text x="1725" y="572">R</text><text x="1725" y="615">C</text>
            <text x="1143" y="559">n</text><text x="1194" y="565">~</text><text x="1243" y="572">~1</text><text x="1294" y="597">~2</text><text x="1243" y="622">vT</text>
            <text x="1436" y="621">~123</text><text x="1480" y="621">~231</text><text x="1536" y="629">~3</text><text x="1536" y="678">~2</text><text x="1588" y="629">~1</text><text x="1589" y="679">vT</text>
            <path d="M1510 688q-2-2 0-4t0-4" fill="none" stroke="#24505a"/>
          </g>
          <g class="inner">
            <text x="1151" y="691">ref</text><text x="1178" y="691">S1</text><text x="1151" y="753">w</text><text x="1178" y="753">S2</text>
            <text x="1784" y="496">w</text><text x="1068" y="753">w</text><text x="1603" y="808">i</text><text x="1599" y="846">w</text>
          </g>
          <g class="name">
            <text x="1666" y="424">ASM measurement2</text><text x="1666" y="474">ASM measurement1</text><text x="1666" y="530">ASM measurement</text>
            <text x="1682" y="647">Asynchronous Machine</text><text x="1682" y="665">Squirrel Cage</text><text x="1682" y="682">(fundamental)</text>
            <text x="1172" y="610">Voltage Source</text><text x="1275" y="654">S1</text><text x="1569" y="710">S2</text><text x="1172" y="797">Controller</text>
            <text x="1078" y="716">Start demand</text><text x="1079" y="736" fill="#555">1 at 1 s</text><text x="1375" y="591">i</text><text x="1322" y="785">f(x) = 0</text>
            <text x="1456" y="692">Grounded</text><text x="1465" y="709">Neutral</text>
          </g>
          <g class="signame"><text x="1810" y="421">slip</text><text x="1810" y="458">torque</text><text x="1682" y="821">Phase currents, A</text><text x="1682" y="858">w_angular velocity</text></g>
        </svg>
        <article class="memo"><h2>Three-Phase Asynchronous Machine Starting</h2>
          <p>1. <a href="#">Explore simulation results</a> using <a href="#">sscexplore</a></p><p>2. <a href="#">Learn more</a> about this example</p></article>
        <div class="ghost"></div>
        </div>
      </div>
    </div>
    <footer class="status"><span>Ready</span><output>125%</output><a href="#">ode23t</a><svg class="grip" viewBox="0 0 9 9"><path d="M6 0h2v2H6zM3 3h2v2H3zM6 3h2v2H6zM0 6h2v2H0zM3 6h2v2H3zM6 6h2v2H6z" fill="#b4b4b4"/></svg></footer>
  </section>
</main>
<script src="plots.js"></script>
</body>
</html>
```
FILE: styles.css
```css
* { box-sizing: border-box; }
body { margin: 0; background: #fff; font-family: "Open Sans", "Liberation Sans", sans-serif; font-size: 11px; color: #111; }
button { border: 0; padding: 0; margin: 0; background: none; font: inherit; color: inherit; display: flex; align-items: center; justify-content: center; }
.defs { position: absolute; width: 0; height: 0; }
.desk { display: grid; grid-template-columns: 1fr 1fr; }
.scopes { position: relative; display: flex; flex-direction: column; }
.window { display: flex; flex-direction: column; background: #fff; border-top: 2px solid #26282c; border-left: 1px solid #e4e4e4; border-right: 1px solid #26282c; }
.model { border-left-color: #a0a0a0; border-right-color: #9a9a9a; }

.titlebar { display: flex; align-items: center; height: 29px; padding-left: 8px; }
.titlebar h1 { flex: 1; margin: 0 0 0 5px; font-size: 11px; font-weight: 400; line-height: 16px; }
.idle .titlebar h1 { color: #999; }
.wbtn { width: 46px; height: 29px; }
.wbtn svg { width: 10px; height: 10px; }
.idle .wbtn { color: #999; }

.menu { display: flex; gap: 17px; height: 26px; padding: 2px 4px 0 8px; line-height: 16px; }
.idle .menu { color: #000; }
.menu .dock { margin-left: auto; }
.dock svg { width: 8px; height: 6px; }
.model .menu { height: 23px; padding-top: 3px; color: #333; }

.tools { display: flex; align-items: center; height: 29px; padding-bottom: 3px; background: #f0f0f0; border-top: 1px solid #999; border-bottom: 1px solid #fff; box-shadow: inset 0 -1px #a0a0a0; }
.tools button { width: 23px; height: 22px; }
.tools .drop { width: 13px; }
.drop svg { width: 5px; height: 3px; }
.tools i { width: 1px; height: 21px; margin: 0 3px; background: #999; }
.i16 { width: 16px; height: 16px; }
.i18 { width: 18px; height: 18px; }
.i20 { width: 20px; height: 20px; }
.i22 { width: 22px; height: 22px; }
.i24 { width: 24px; height: 24px; }

.tools.big { height: 42px; padding: 0 0 0 2px; border-top: 1px solid #f8f8f8; border-bottom: 1px solid #b0b0b0; box-shadow: none; }
.big button { width: 31px; height: 32px; }
.tools.big .drop { width: 12px; }
.big .drop svg { width: 8px; height: 4px; }
.big i { align-self: stretch; height: auto; margin: 0 2px 0 1px; background: #b4b4b4; }
.big i.short { margin: 5px 2px 5px 1px; background: #d6d6d6; }
.time { width: 68px; height: 20px; margin: 0 18px 0 11px; padding: 0 3px; border: 1px solid #7a7a7a; background: #fff; font: inherit; color: #333; }
.mode { display: grid; align-items: center; width: 114px; margin-right: 9px; }
.mode select { grid-area: 1 / 1; height: 20px; padding: 0 4px; appearance: none; border: 1px solid #adadad; border-radius: 0; background: #e1e1e1; font: inherit; color: #222; }
.mode svg { grid-area: 1 / 1; justify-self: end; width: 8px; height: 4px; margin-right: 5px; pointer-events: none; }

.plot { display: block; width: 100%; background: #282828; font-family: "Liberation Sans", sans-serif; font-size: 11px; fill: #b0b0b0; }
.ptitle { font-size: 13px; text-anchor: middle; }
.ylab { text-anchor: end; }
.xlab { text-anchor: middle; }
.axes { fill: #000; stroke: #b4b4b4; }
.grid { fill: none; stroke: #505050; }
.tick { fill: none; stroke: #b4b4b4; }
.curve { fill: none; stroke: #ffff11; stroke-linejoin: bevel; }
.legend { fill: #e0e0e0; }
.legend path { fill: none; }
.legend .frame { fill: #000; stroke: #f0f0f0; }
.y { stroke: #ffff11; }
.b { stroke: #139fff; }
.o { stroke: #ff6929; }
.phase { fill: none; stroke-linejoin: bevel; }
.phase.o { stroke-width: 1.3; }
.core { fill: #ff6929; }

.status { display: flex; align-items: center; gap: 2px; height: 25px; padding: 3px 3px 1px 2px; background: #f0f0f0; border-top: 1px solid #a0a0a0; line-height: 16px; }
.status span { flex: 1; }
.idle .status { font-family: "Liberation Sans", sans-serif; font-size: 12px; }
.idle .status output { padding: 0 4px 0 3px; height: 19px; border: 1px solid #fff; border-color: #a0a0a0 #fff #fff #a0a0a0; }
.drawer { position: absolute; left: 0; top: 447px; width: 21px; height: 62px; }

.tabs { display: flex; align-items: flex-end; height: 22px; padding-left: 2px; background: #f0f0f0; }
.tabs button { height: 20px; padding: 0 10px; background: #fff; border: 1px solid #dcdcdc; border-bottom: 0; color: #333; }
.work { flex: 1; display: flex; background: #f0f0f0; }
.side { display: flex; flex-direction: column; align-items: center; width: 34px; padding: 1px 0 2px; }
.side button { width: 28px; height: 28px; }
.side hr { width: 19px; margin: 4px 0 5px; border: 0; border-top: 1px solid #a0a0a0; }
.side .low { margin-top: auto; }
.editor { flex: 1; display: flex; flex-direction: column; margin-right: 2px; background: #fff; border: 1px solid #80868e; }
.crumbs { display: flex; align-items: center; gap: 2px; height: 30px; padding: 0 5px 1px 2px; border-bottom: 2px solid #80868e; }
.crumbs a { color: #333; text-decoration: none; }
.crumbs .tri { width: 5px; height: 9px; margin-left: 5px; }
.crumbs button { margin-left: auto; width: 10px; height: 20px; }
.crumbs button svg { width: 9px; height: 5px; }
.canvas { position: relative; flex: 1; }
.diagram { display: block; width: 100%; font-family: "Liberation Sans", sans-serif; }
.sig path, .sigline { fill: none; stroke: #a46a70; stroke-width: 1.3; }
.sig .dot { fill: #a46a70; }
.open { fill: #fff; stroke: #111; stroke-width: 1.2; }
.wire { fill: none; stroke: #000; stroke-width: 1.2; }
.elec { fill: none; stroke: #82b2cc; stroke-width: 1.3; }
.elec .dot { fill: #82b2cc; stroke: none; }
.gnd { fill: none; stroke: #3d66c9; stroke-width: 1.3; }
.mech { fill: none; stroke: #2fd45c; stroke-width: 1.4; }
.mech .fill { fill: #2fd45c; }
.block { fill: #fff; stroke: #111; stroke-width: 1.2; }
.block .shaded { fill: url(#gCtl); }
.port { font-size: 12px; fill: #24505a; }
.inner { font-size: 13px; }
.name { font-size: 15px; text-anchor: middle; }
.signame { font-size: 14px; text-anchor: middle; }
.memo { position: absolute; left: 34px; top: 661px; font: 15px/18px "Liberation Sans", sans-serif; color: #111; white-space: nowrap; }
.memo h2 { margin: 0; font-size: 17px; line-height: 22px; color: #000; }
.memo p { margin: 0; }
.memo a { color: #1010f0; text-underline-offset: 3px; }
.ghost { position: absolute; right: 1px; bottom: 2px; width: 20px; height: 10px; background: #f1f1f1; }

.model .status { height: 24px; padding: 0 3px 0 6px; border: 0; color: #333; }
.model .status span { flex: 8; }
.model .status output { flex: 7; }
.model .status a { padding-right: 7px; border-right: 1px solid #ccc; color: #26268e; text-decoration: none; }
.grip { align-self: flex-end; width: 9px; height: 9px; margin-left: 6px; }
```
FILE: plots.js
```js
const NS = "http://www.w3.org/2000/svg";

function add(parent, cls, d) {
  const p = document.createElementNS(NS, "path");
  p.setAttribute("class", cls);
  p.setAttribute("d", d);
  parent.appendChild(p);
}

// Axes box with grid lines and short bright ticks at the edges.
function axes(id, x0, x1, y0, y1, step, rows) {
  const g = document.getElementById(id);
  add(g, "axes", `M${x0} ${y0}H${x1}V${y1}H${x0}z`);
  let grid = "", tick = "";
  for (let k = 1; k < 8; k++) {
    const x = Math.floor(x0 + step * k) + 0.5;
    grid += `M${x} ${y0}V${y1}`;
    tick += `M${x} ${y0}v9M${x} ${y1}v-9`;
  }
  for (const y of rows) {
    grid += `M${x0} ${y}H${x1}`;
    tick += `M${x0} ${y}h9M${x1} ${y}h-9`;
  }
  add(g, "grid", grid);
  add(g, "tick", tick);
  return g;
}

// Monotone cubic tangents through a list of [x, y] points.
function tangents(p) {
  const s = p.slice(1).map((q, i) => (q[1] - p[i][1]) / (q[0] - p[i][0]));
  return p.map((q, i) => {
    if (i === 0) return s[0];
    if (i === p.length - 1) return s[i - 1];
    return s[i - 1] * s[i] <= 0 ? 0 : (2 * s[i - 1] * s[i]) / (s[i - 1] + s[i]);
  });
}

function smooth(p) {
  const m = tangents(p);
  let d = `M${p[0]}`;
  for (let i = 1; i < p.length; i++) {
    const h = (p[i][0] - p[i - 1][0]) / 3;
    d += `C${p[i - 1][0] + h} ${p[i - 1][1] + m[i - 1] * h} ${p[i][0] - h} ${p[i][1] - m[i] * h} ${p[i]}`;
  }
  return d;
}

function sampler(p) {
  const m = tangents(p);
  return x => {
    let i = 1;
    while (i < p.length - 1 && x > p[i][0]) i++;
    const h = p[i][0] - p[i - 1][0], t = (x - p[i - 1][0]) / h, u = 1 - t;
    return p[i - 1][1] * u * u * (1 + 2 * t) + m[i - 1] * h * t * u * u + p[i][1] * t * t * (3 - 2 * t) - m[i] * h * t * t * u;
  };
}

const PERIOD = 29.4;

// Phase currents
const phase = axes("phase", 26.5, 944.5, 106.5, 247.5, 114.8, [111.5, 144.5, 177.5, 209.5, 242.5]);
const env = [[141, 42], [200, 42], [370, 40.5], [480, 38.5], [520, 36], [540, 33], [553.9, 28.5], [554, 48], [558, 48.5], [563, 44], [572, 34.5], [578, 35.5], [583, 29], [592, 11], [597, 14], [604.5, 29], [615, 6.5], [621, 9], [626, 20], [631, 33.5], [636, 22], [640, 7], [645, 13], [648, 13.5], [653, 28], [657, 41], [661, 29], [665, 6], [671, 19.5], [675, 20], [679, 31], [684, 48], [688, 33], [692, 8], [699, 29], [705, 26], [709, 42], [713, 54.5]];
for (let x = 721; x < 960; x += PERIOD) env.push([x, 9], [x + 7.5, 33], [x + 12, 29], [x + 17, 44], [x + 21.5, 56]);
const amp = sampler(env);
add(phase, "phase o", "M27 177.5H141");
[["y", 0], ["b", 2.094], ["o", 4.189]].forEach(([cls, ph]) => {
  let d = "";
  for (let x = 141; x <= 944; x += 0.12) d += `${d ? "L" : "M"}${x.toFixed(2)} ${(177 - amp(x) * Math.sin(2 * Math.PI * (x - 141) / 1.92 + ph)).toFixed(1)}`;
  add(phase, "phase " + cls, d);
});
// The traces merge into a solid band close to the zero line.
let upper = "", lower = "";
for (let x = 141; x <= 944; x += 1) {
  const a = amp(x) * (0.3 + 0.12 * Math.sin(x * 1.3));
  upper += `${upper ? "L" : "M"}${x} ${(177 - a).toFixed(1)}`;
  lower = `L${x} ${(177 + a).toFixed(1)}` + lower;
}
add(phase, "core", upper + lower + "z");

// Angular velocity
const omega = axes("omega", 26.5, 944.5, 280.5, 412.5, 114.8, [316.5, 357.5, 398.5]);
const w = [[140, 398.5], [255, 383], [370, 363.5], [430, 351], [485, 336.5], [515, 326.5], [539, 316], [558, 304.5], [566, 302], [575, 299], [586, 301.5], [600, 298], [612, 301.5], [626, 297], [638, 302.5], [652, 296], [663, 303.5], [680, 294.5], [691, 304.5]];
for (let x = 708; x < 950; x += PERIOD) w.push([x, 293.7], [x + 11.5, 305.5]);
add(omega, "curve", "M26 398.5H140");
add(omega, "curve", smooth(w.filter(q => q[0] < 945)));

// Slip
const slip = axes("slip", 19.5, 944.5, 564.5, 706.5, 115.7, [578.5, 623.5, 667.5]);
const s = [[136, 578.5], [250, 596], [366, 617], [430, 631], [480, 645.5], [510, 656], [535, 667.5], [554, 679], [562, 682], [572, 686.5], [584, 683.5], [598, 687.5], [610, 683.5], [624, 688.5], [635, 682.5], [650, 689.5], [662, 681.5], [677, 691]];
for (let x = 689; x < 950; x += PERIOD) s.push([x, x < 700 ? 680.5 : 679.5], [x + 17.5, 691.7]);
add(slip, "curve", "M19 578.5H136");
add(slip, "curve", smooth(s.filter(q => q[0] < 945)));

// Torque
const torque = axes("torque", 19.5, 944.5, 739.5, 870.5, 115.7, [759.5, 789.5, 819.5, 849.5]);
let burst = "M20 789.5H134.5";
for (let x = 134.5; x < 250; x += 0.2) burst += `L${x.toFixed(1)} ${(784 - (x - 134.5) / 90 - 6.2 * Math.exp(-(x - 134.5) / 38) * Math.sin(Math.PI * (x - 134.5) / 0.96)).toFixed(1)}`;
add(torque, "curve", burst);
add(torque, "curve", smooth([[250, 782.7], [366, 781], [430, 778.8], [480, 776.5], [510, 773.5], [530, 769], [551, 761.5]]) + "V769");
const t = [[551, 769], [556, 774.5], [564, 768.5], [577.5, 804.7], [591, 773], [603, 810.5], [617, 769], [629, 820.5], [644, 762.5], [655.5, 833.5], [665, 771], [672, 756.5], [683, 848.5], [691, 771], [695, 763], [701.5, 752.5]];
for (let x = 712; x < 950; x += 29.5) t.push([x, 857.5], [x + 4.5, 805], [x + 8, 768], [x + 13, 761], [x + 19, 752.5], [x + 24, 790]);
add(torque, "curve", smooth(t.filter(q => q[0] < 943).concat([[944, 830]])));
```
